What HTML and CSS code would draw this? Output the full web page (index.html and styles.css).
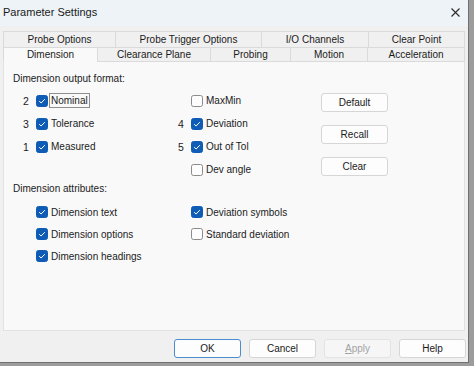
FILE: index.html
```html
<!DOCTYPE html>
<html>
<head>
<meta charset="utf-8">
<link rel="stylesheet" href="styles.css">
</head>
<body>
<div class="window">
  <div class="titlebar">
    <span class="title">Parameter Settings</span>
    <svg class="close" width="9" height="9" viewBox="0 0 9 9"><path d="M0.5 0.5 L8.5 8.5 M8.5 0.5 L0.5 8.5" stroke="#2a2a2a" stroke-width="1.1" fill="none"/></svg>
  </div>
  <div class="tabs">
    <div class="tabrow back">
      <div class="tab t-po">Probe Options</div>
      <div class="tab t-pto">Probe Trigger Options</div>
      <div class="tab t-io">I/O Channels</div>
      <div class="tab t-cp">Clear Point</div>
    </div>
    <div class="tabrow front">
      <div class="tab sel t-dim">Dimension</div>
      <div class="tab t-clp">Clearance Plane</div>
      <div class="tab t-prb">Probing</div>
      <div class="tab t-mot">Motion</div>
      <div class="tab t-acc">Acceleration</div>
    </div>
  </div>
  <div class="panel">
    <div class="heading">Dimension output format:</div>
    <div class="format">
      <div class="col c1">
        <div class="item"><span class="num">2</span><span class="cb on"><svg viewBox="0 0 12 12"><path d="M3.2 6.2 L5.1 8 L8.8 4.2" stroke="#fff" stroke-width="1" fill="none"/></svg></span><span class="lbl focus">Nominal</span></div>
        <div class="item"><span class="num">3</span><span class="cb on"><svg viewBox="0 0 12 12"><path d="M3.2 6.2 L5.1 8 L8.8 4.2" stroke="#fff" stroke-width="1" fill="none"/></svg></span><span class="lbl">Tolerance</span></div>
        <div class="item"><span class="num">1</span><span class="cb on"><svg viewBox="0 0 12 12"><path d="M3.2 6.2 L5.1 8 L8.8 4.2" stroke="#fff" stroke-width="1" fill="none"/></svg></span><span class="lbl">Measured</span></div>
      </div>
      <div class="col c2">
        <div class="item"><span class="num"></span><span class="cb"></span><span class="lbl">MaxMin</span></div>
        <div class="item"><span class="num">4</span><span class="cb on"><svg viewBox="0 0 12 12"><path d="M3.2 6.2 L5.1 8 L8.8 4.2" stroke="#fff" stroke-width="1" fill="none"/></svg></span><span class="lbl">Deviation</span></div>
        <div class="item"><span class="num">5</span><span class="cb on"><svg viewBox="0 0 12 12"><path d="M3.2 6.2 L5.1 8 L8.8 4.2" stroke="#fff" stroke-width="1" fill="none"/></svg></span><span class="lbl">Out of Tol</span></div>
        <div class="item"><span class="num"></span><span class="cb"></span><span class="lbl">Dev angle</span></div>
      </div>
      <div class="col btns">
        <button class="btn">Default</button>
        <button class="btn">Recall</button>
        <button class="btn">Clear</button>
      </div>
    </div>
    <div class="heading h2">Dimension attributes:</div>
    <div class="attrs">
      <div class="col c1">
        <div class="item a"><span class="num"></span><span class="cb on"><svg viewBox="0 0 12 12"><path d="M3.2 6.2 L5.1 8 L8.8 4.2" stroke="#fff" stroke-width="1" fill="none"/></svg></span><span class="lbl">Dimension text</span></div>
        <div class="item a"><span class="num"></span><span class="cb on"><svg viewBox="0 0 12 12"><path d="M3.2 6.2 L5.1 8 L8.8 4.2" stroke="#fff" stroke-width="1" fill="none"/></svg></span><span class="lbl">Dimension options</span></div>
        <div class="item a"><span class="num"></span><span class="cb on"><svg viewBox="0 0 12 12"><path d="M3.2 6.2 L5.1 8 L8.8 4.2" stroke="#fff" stroke-width="1" fill="none"/></svg></span><span class="lbl">Dimension headings</span></div>
      </div>
      <div class="col c2">
        <div class="item a"><span class="num"></span><span class="cb on"><svg viewBox="0 0 12 12"><path d="M3.2 6.2 L5.1 8 L8.8 4.2" stroke="#fff" stroke-width="1" fill="none"/></svg></span><span class="lbl">Deviation symbols</span></div>
        <div class="item a"><span class="num"></span><span class="cb"></span><span class="lbl">Standard deviation</span></div>
      </div>
    </div>
  </div>
  <div class="footer">
    <button class="btn fb default">OK</button>
    <button class="btn fb">Cancel</button>
    <button class="btn fb disabled"><u>A</u>pply</button>
    <button class="btn fb">Help</button>
  </div>
</div>
</body>
</html>
```
FILE: styles.css
```css
* { box-sizing: border-box; }
html, body { margin: 0; padding: 0; }
body {
  width: 474px;
  height: 366px;
  background: #9c9c9c;
  font-family: "Liberation Sans", Arial, sans-serif;
  font-size: 10px;
  color: #1b1b1b;
  overflow: hidden;
}
.window {
  width: 469px;
  height: 363px;
  background: #f0f0f0;
  border-right: 1px solid #707070;
  border-bottom: 1px solid #707070;
  display: flex;
  flex-direction: column;
}
.titlebar {
  height: 26px;
  background: #edf3f6;
  display: flex;
  align-items: center;
  justify-content: space-between;
  padding: 0 8px 2px 3px;
}
.title { font-size: 11px; color: #1a1a1a; }
.close { display: block; margin-top: 1px; }
.tabs {
  margin: 5px 0 0 3px;
  width: 462px;
}
.tabrow { display: flex; }
.tab {
  text-align: center;
  border-top: 1px solid #dadada;
  border-left: 1px solid #dadada;
  background: #f0f0f0;
  color: #1b1b1b;
}
.tab:last-child { border-right: 1px solid #dadada; }
.back .tab { height: 16px; line-height: 15px; }
.front .tab { height: 15px; line-height: 14px; border-bottom: 1px solid #dadada; }
.front .tab.sel { background: #f9f9f9; border-bottom-color: #f9f9f9; }
.t-po { width: 112px; }
.t-pto { width: 146px; }
.t-io { width: 107px; }
.t-cp { width: 97px; }
.t-dim { width: 94px; }
.t-clp { width: 113px; }
.t-prb { width: 80px; }
.t-mot { width: 77px; }
.t-acc { width: 98px; }
.panel {
  margin-left: 3px;
  width: 462px;
  height: 269px;
  background: #f9f9f9;
  border-left: 1px solid #e2e2e2;
  border-right: 1px solid #e2e2e2;
  border-bottom: 1px solid #e2e2e2;
  padding: 10px 0 0 9px;
}
.heading { height: 14px; line-height: 14px; }
.h2 { margin-top: 1px; }
.format { display: flex; margin: 3px 0 0 7px; }
.attrs { display: flex; margin: 5px 0 0 7px; }
.col { display: flex; flex-direction: column; }
.c1 { width: 155px; }
.c2 { width: 146px; }
.item { height: 23px; display: flex; align-items: center; }
.item.a { height: 22px; }
.num { width: 12px; text-align: center; margin-right: 4px; font-size: 10.5px; }
.cb {
  width: 12px;
  height: 12px;
  border-radius: 2.5px;
  border: 1px solid #8b8b8b;
  background: #fdfdfd;
  margin-right: 2px;
  flex: none;
}
.cb.on { background: #0f5cb6; border-color: #0f5cb6; }
.cb svg { display: block; width: 12px; height: 12px; margin: -1px; }
.lbl { padding: 0 1px; line-height: 13px; border: 1px solid transparent; margin-left: -1px; }
.lbl.focus { border-color: #8e8e8e; }
.btns { padding-top: 4px; gap: 13px; }
.btn {
  width: 67px;
  height: 19px;
  font-family: "Liberation Sans", Arial, sans-serif;
  font-size: 10px;
  color: #1b1b1b;
  background: #fdfdfd;
  border: 1px solid #d6d6d6;
  border-radius: 3px;
  padding: 0;
  line-height: 17px;
}
.footer {
  flex: 1;
  display: flex;
  justify-content: flex-end;
  gap: 8px;
  padding: 8px 2px 0 0;
}
.fb { height: 19px; }
.default { border-color: #4b8bd0; }
.disabled { background: #f6f6f6; color: #a3a3a3; border-color: #e3e3e3; }
.disabled u { text-decoration: underline; }
```
